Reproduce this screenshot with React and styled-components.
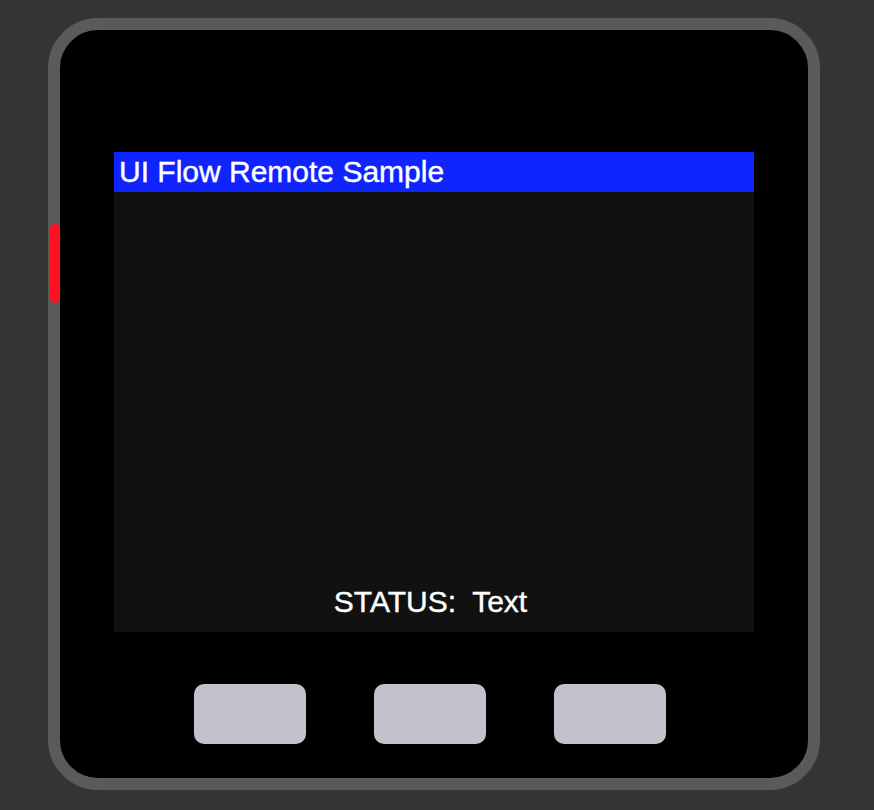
import React from 'react'
import styled, { createGlobalStyle } from 'styled-components'

const GlobalStyle = createGlobalStyle`
    html, body {
        margin: 0;
        padding: 0;
        background: #333534;
        font-family: "Liberation Sans", Arial, sans-serif;
    }
`

const Page = styled.div`
    width: 874px;
    height: 810px;
    padding: 18px 0 0 48px;
    box-sizing: border-box;
`

const Device = styled.div`
    position: relative;
    width: 772px;
    height: 772px;
    box-sizing: border-box;
    border: 12px solid #5a5a5a;
    border-radius: 50px;
    background: #000;
    display: flex;
    flex-direction: column;
    align-items: center;
    padding-top: 122px;
`

const SideLed = styled.div`
    position: absolute;
    left: -10px;
    top: 194px;
    width: 10px;
    height: 79px;
    border-radius: 5px;
    background: #ff0f1f;
`

const Screen = styled.div`
    width: 640px;
    height: 480px;
    background: #111111;
    display: flex;
    flex-direction: column;
    justify-content: space-between;
`

const TitleBar = styled.div`
    height: 40px;
    line-height: 40px;
    background: #0f24ff;
    color: #fff;
    font-size: 30px;
    padding-left: 5px;
    white-space: nowrap;
    -webkit-text-stroke: 0.4px #fff;
`

const Status = styled.div`
    color: #fff;
    font-size: 30px;
    line-height: 40px;
    text-align: center;
    padding: 0 7px 10px 0;
    white-space: pre;
    -webkit-text-stroke: 0.4px #fff;
`

const ButtonRow = styled.div`
    display: flex;
    gap: 68px;
    margin-top: 52px;
    padding-right: 8px;
`

const Button = styled.div`
    width: 112px;
    height: 60px;
    border-radius: 10px;
    background: #c3c1cc;
`

export default function App() {
    return (
        <Page>
            <GlobalStyle />
            <Device>
                <SideLed />
                <Screen>
                    <TitleBar>UI Flow Remote Sample</TitleBar>
                    <Status>{'STATUS:  Text'}</Status>
                </Screen>
                <ButtonRow>
                    <Button />
                    <Button />
                    <Button />
                </ButtonRow>
            </Device>
        </Page>
    )
}
